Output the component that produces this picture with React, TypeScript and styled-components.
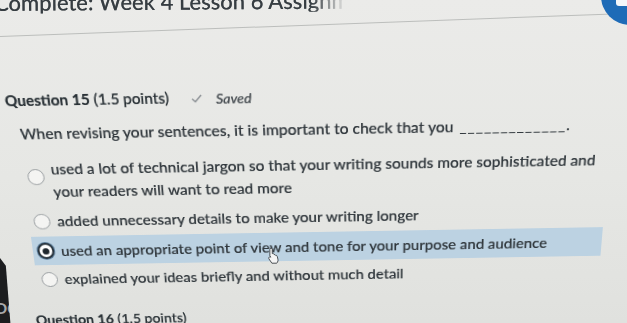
import styled, { createGlobalStyle } from "styled-components"

interface Choice {
  id: string
  lines: string[]
  selected?: boolean
}

const choices: Choice[] = [
  {
    id: 'a',
    lines: [
      'used a lot of technical jargon so that your writing sounds more sophisticated and',
      'your readers will want to read more'
    ]
  },
  { id: 'b', lines: ['added unnecessary details to make your writing longer'] },
  {
    id: 'c',
    lines: ['used an appropriate point of view and tone for your purpose and audience'],
    selected: true
  },
  { id: 'd', lines: ['explained your ideas briefly and without much detail'] }
]

function App () {
  return <Page>
    <GlobalStyle />
    <TopBar>
      <Title>Complete: Week 4 Lesson 6 Assignment</Title>
      <Divider />
    </TopBar>

    {/* the screen was photographed at an angle: one perspective transform on the whole sheet */}
    <Content>
      <QuestionHeader>
        <strong>Question 15</strong>
        <Points>(1.5 points)</Points>
        <SavedTag>
          <svg width="11" height="9" viewBox="0 0 11 9">
            <path d="M1 4.8l3 3L10 1" fill="none" stroke="#8d9296" strokeWidth="1.4" />
          </svg>
          Saved
        </SavedTag>
      </QuestionHeader>

      <Prompt>
        When revising your sentences, it is important to check that you
        <Blank>_____________</Blank>.
      </Prompt>

      <OptionList>
        {choices.map(choice => (
          <OptionRow key={choice.id} $selected={choice.selected} $tall={choice.lines.length > 1}>
            <Radio $selected={choice.selected} $tall={choice.lines.length > 1}>
              {choice.selected && <RadioDot />}
            </Radio>
            <OptionText>
              {choice.lines.map((line, i) => <div key={i}>{line}</div>)}
            </OptionText>
          </OptionRow>
        ))}
      </OptionList>

      <NextHeader>
        <strong>Question 16</strong>
        <Points>(1.5 points)</Points>
      </NextHeader>
    </Content>

    <ChatBubble>
      <ChatGlyph />
    </ChatBubble>

    <Cursor width="13" height="17" viewBox="0 0 16 21">
      <path
        d="M5 1.5c.8 0 1.5.7 1.5 1.5v5.2l.4-.1c.8-.2 1.6.2 1.8 1l.1.3c.7-.3 1.6 0 1.8.8l.1.3c.8-.3 1.7.1 1.9 1l.9 3.6c.3 1.3.1 2.6-.6 3.7L12 20H6l-3.6-5.3c-.5-.8-.3-1.8.4-2.3.6-.4 1.4-.3 1.9.2l-1.2-1.6V3c0-.8.7-1.5 1.5-1.5z"
        fill="#f4f4f4"
        stroke="#3a3f44"
        strokeWidth="1.1"
      />
    </Cursor>

    <Bezel>
      <BezelLabel>DC</BezelLabel>
    </Bezel>
  </Page>
}

const GlobalStyle = createGlobalStyle`
  html, body {
    margin: 0;
    padding: 0;
  }
  body {
    font-family: Lato, "Open Sans", sans-serif;
  }
`

const Page = styled.div`
  position: relative;
  width: 627px;
  height: 323px;
  overflow: hidden;
  background: linear-gradient(180deg, #ebebe9 0%, #e6e7e4 55%, #e0e1de 100%);
  color: #30373c;
  text-shadow: 0 0 0.6px rgba(40, 47, 52, 0.55);
`

const TopBar = styled.div`
  display: flex;
  flex-direction: column;
  height: 37px;
`

const Title = styled.h1`
  margin: -8px 0 0 -6px;
  font-size: 22px;
  line-height: 22px;
  font-weight: 500;
  color: #363d42;
  white-space: nowrap;
  transform: rotate(-0.4deg);
  transform-origin: 0 0;
  -webkit-mask-image: linear-gradient(90deg, #000 318px, transparent 352px);
  mask-image: linear-gradient(90deg, #000 318px, transparent 352px);
`

const Divider = styled.div`
  margin-top: 21.5px;
  width: 680px;
  border-top: 1.5px solid #bcbebc;
  transform: rotate(-2.1deg);
  transform-origin: 0 0;
`

const Content = styled.div`
  padding: 52px 0 0 6px;
  transform: matrix3d(1, -0.017, 0, 0, 0.14, 1, 0, 0.000363, 0, 0, 1, 0, -10, 0, 0, 0.955);
  transform-origin: 0 0;
`

const QuestionHeader = styled.div`
  display: flex;
  align-items: baseline;
  font-size: 15px;
  line-height: 20px;
  font-weight: 500;
  color: #283035;
  white-space: nowrap;

  strong {
    font-weight: 700;
  }
`

const Points = styled.span`
  margin-left: 4px;
`

const SavedTag = styled.span`
  display: inline-flex;
  align-items: center;
  gap: 13px;
  margin-left: 22px;
  font-size: 14px;
  font-style: italic;
  color: #474d52;
`

const Prompt = styled.p`
  margin: 10.5px 0 0 10.5px;
  font-size: 15.5px;
  line-height: 24.4px;
  font-weight: 500;
  white-space: nowrap;
`

const Blank = styled.span`
  margin-left: 6px;
  letter-spacing: 1px;
`

const OptionList = styled.div`
  display: flex;
  flex-direction: column;
  width: 589px;
  margin: 8.2px 0 0 6.6px;
`

const OptionRow = styled.label<{ $selected?: boolean, $tall?: boolean }>`
  display: flex;
  align-items: ${p => p.$tall ? 'flex-start' : 'center'};
  gap: 7px;
  padding: 4px 0 4px 5px;
  background: ${p => p.$selected ? '#bcd2e2' : 'transparent'};
  font-size: 15.5px;
  line-height: 24.4px;
  font-weight: 500;
`

const Radio = styled.span<{ $selected?: boolean, $tall?: boolean }>`
  flex: none;
  display: grid;
  place-items: center;
  box-sizing: border-box;
  width: 17.5px;
  height: 17.5px;
  margin-top: ${p => p.$tall ? '12px' : '0'};
  border-radius: 50%;
  border: ${p => p.$selected ? '2px solid #26313a' : '1.5px solid #969b9e'};
  background: ${p => p.$selected ? '#ffffff' : '#f4f4f2'};
  box-shadow: ${p => p.$selected ? '0 0 0 1px #5d7f9c' : 'none'};
`

const RadioDot = styled.span`
  width: 7px;
  height: 7px;
  border-radius: 50%;
  background: #1f272d;
`

const OptionText = styled.div`
  white-space: nowrap;
`

const NextHeader = styled(QuestionHeader)`
  margin-top: 20px;
`

const ChatBubble = styled.div`
  position: absolute;
  left: 601px;
  top: -33px;
  width: 58px;
  height: 58px;
  border-radius: 50%;
  background: #1e6bb7;
`

const ChatGlyph = styled.span`
  position: absolute;
  left: 15px;
  top: 27px;
  width: 22px;
  height: 12px;
  border-radius: 3px;
  background: #f3f6fa;
`

const Cursor = styled.svg`
  position: absolute;
  left: 267px;
  top: 247px;
`

const Bezel = styled.div`
  position: absolute;
  left: 0;
  top: 258px;
  width: 13px;
  height: 65px;
  background: #1c1d1f;
  clip-path: polygon(0 0, 45% 12%, 80% 100%, 0 100%);
`

const BezelLabel = styled.span`
  position: absolute;
  left: -5px;
  top: 40px;
  font-size: 16px;
  font-weight: 700;
  color: #a7a9ab;
`

export default App
